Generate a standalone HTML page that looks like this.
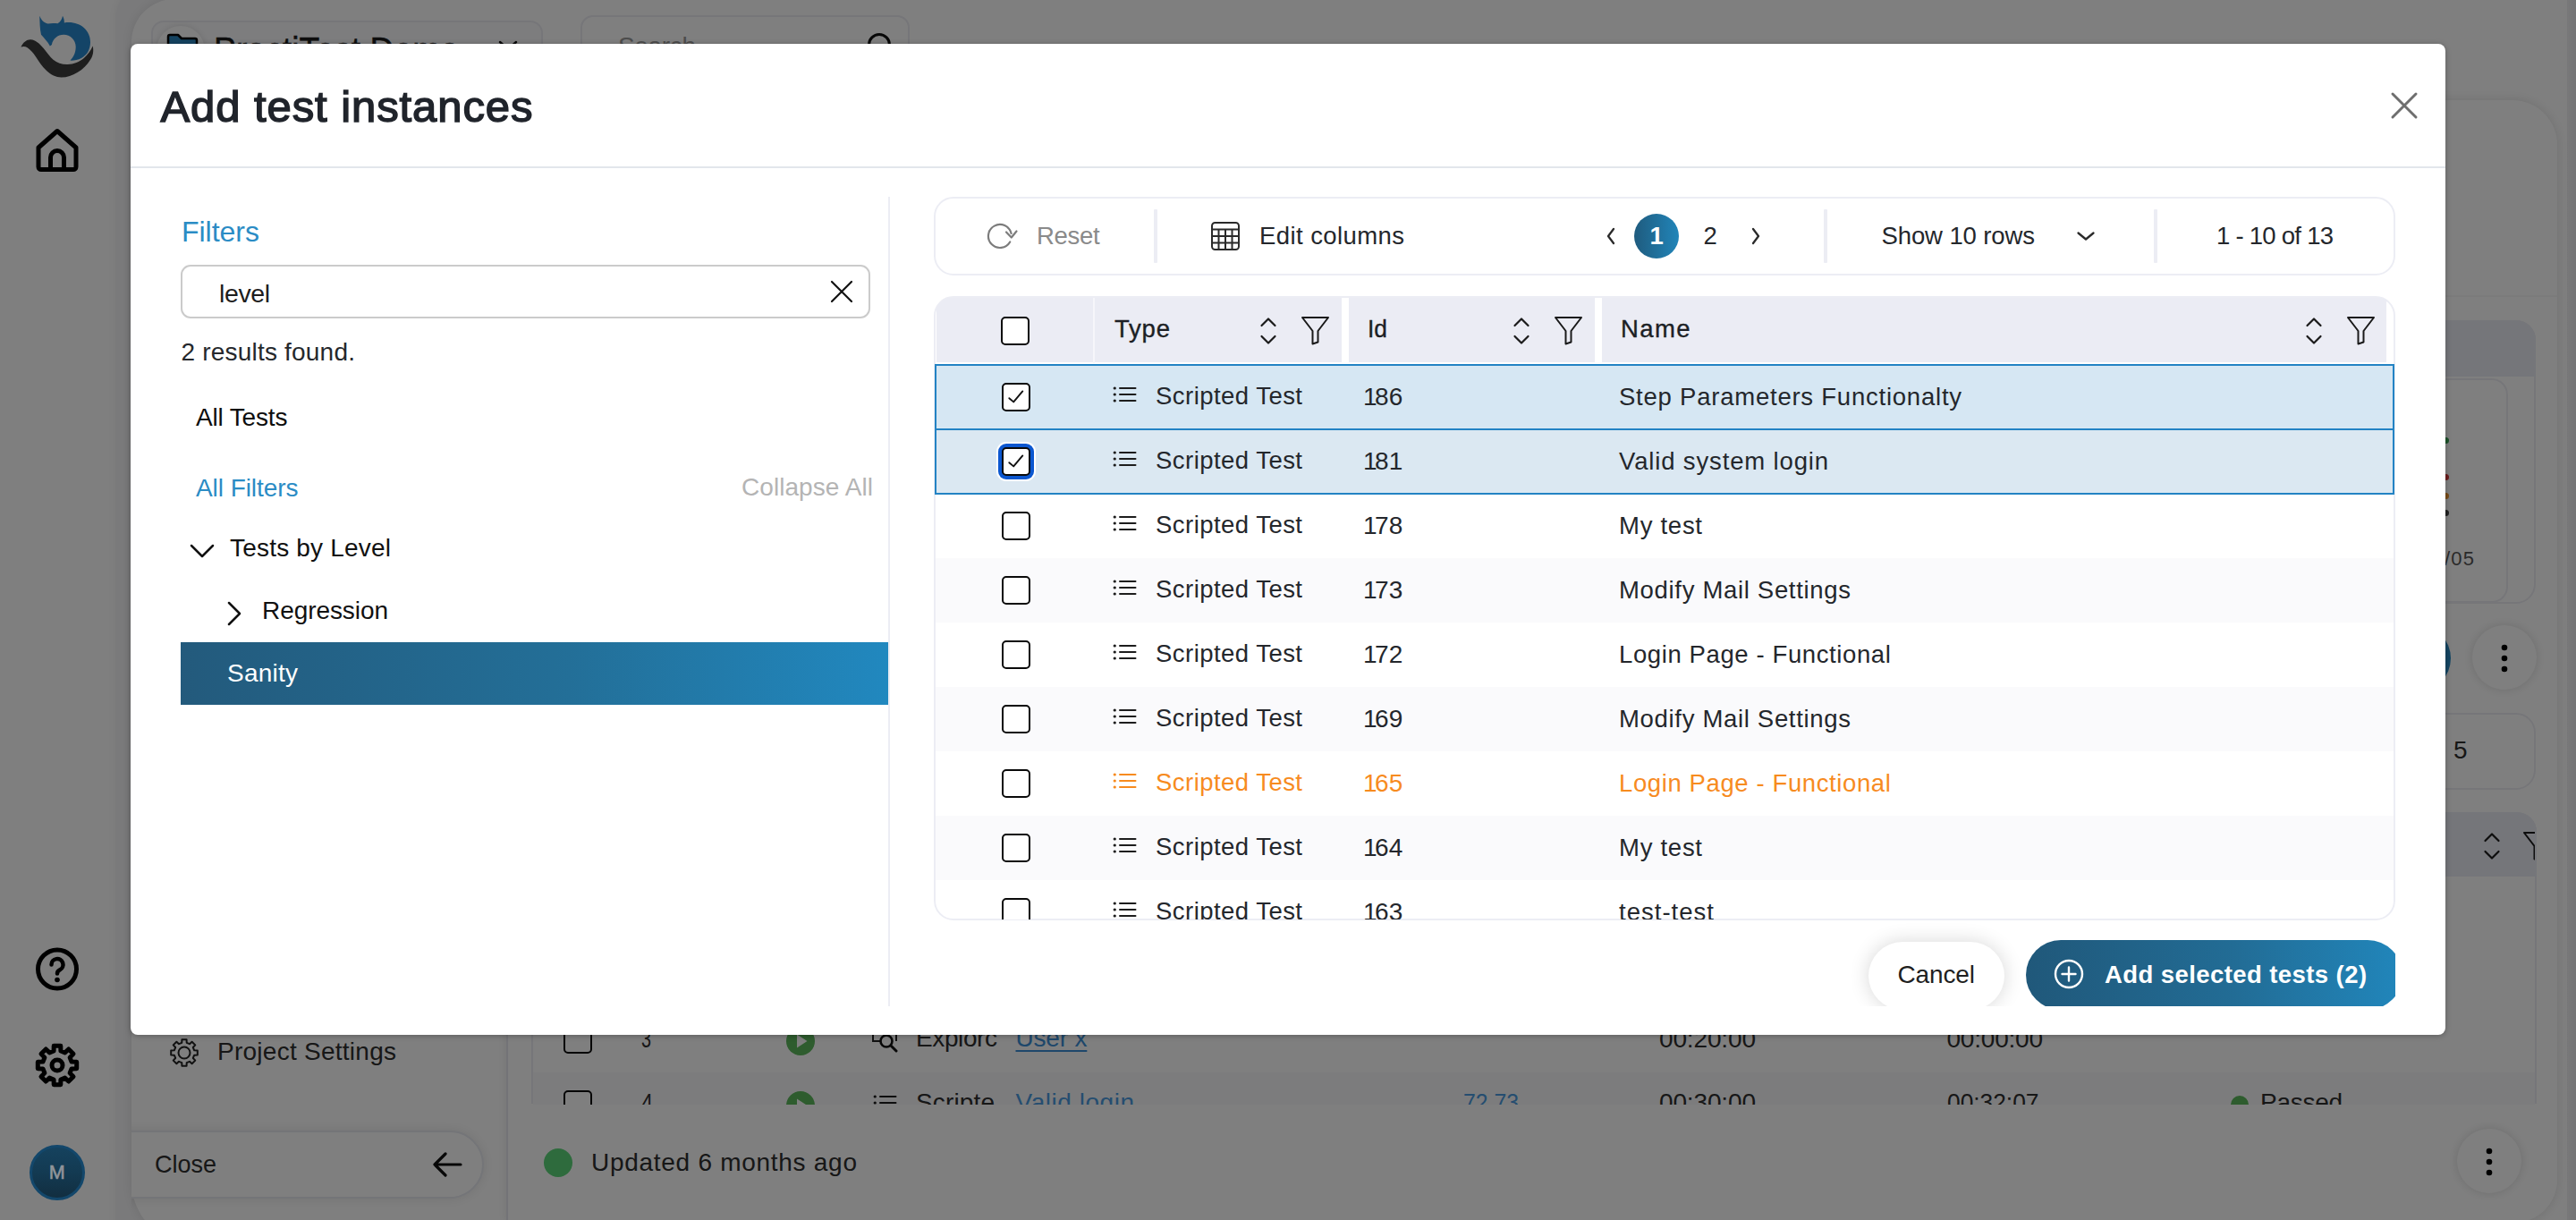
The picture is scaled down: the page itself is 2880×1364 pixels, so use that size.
<!DOCTYPE html><html lang="en"><head><meta charset="utf-8"><title>Add test instances</title><style>
*{box-sizing:border-box;margin:0;padding:0}
html,body{width:2880px;height:1364px;overflow:hidden;background:#fff;font-family:"Liberation Sans",sans-serif;color:#24272c}
.abs,.t,svg{position:absolute}
.t{white-space:nowrap;line-height:1;display:block}
#page{position:absolute;left:0;top:0;width:2880px;height:1364px;overflow:hidden;background:#fefefe}
#dim{position:absolute;left:0;top:0;width:2880px;height:1364px;background:rgba(0,0,0,.5)}
#modal{position:absolute;left:146px;top:49px;width:2588px;height:1108px;background:#fff;border-radius:8px;box-shadow:0 1px 6px rgba(0,0,0,.28);}
#wrap{position:absolute;left:0;top:0;width:2880px;height:1364px}
.cb{position:absolute;width:32px;height:32px;border:2.5px solid #0a0a0a;border-radius:5px;background:#fff}
.hc{position:absolute;top:333px;height:72px;background:#ebecf4}
.row{position:absolute;left:1046px;width:1630px;height:72px}
.row.alt{background:#fafafc}
.row.sel{left:1045px;width:1632px;height:74px;background:#d9e8f3;border:2px solid #2383c4}
.sep{position:absolute;top:234px;width:4px;height:60px;background:#ecedf4;border-radius:1px}
</style></head><body>
<div id="page">
<div class="abs" style="left:129px;top:-30px;width:2800px;height:1450px;border-radius:54px 0 0 54px;background:#f5f5f7;box-shadow:0 0 10px rgba(0,0,0,.05)"></div>
<div class="abs" style="left:147px;top:-1px;width:2733px;height:1392px;border-radius:48px 0 0 70px;background:#fff;box-shadow:0 0 14px rgba(0,0,0,.10)"></div>
<div class="abs" style="left:2870px;top:0;width:10px;height:1364px;background:linear-gradient(90deg,#f1f1f3,#e9e9ec)"></div>
<div class="abs" style="left:568px;top:112px;width:2291px;height:1255px;border-radius:0 50px 48px 0;background:#fff;box-shadow:0 0 13px rgba(0,0,0,.13)"></div>
<div class="abs" style="left:566px;top:112px;width:2px;height:1260px;background:#e6e7ef"></div>
<div class="abs" style="left:169px;top:23px;width:438px;height:70px;border-radius:14px;border:2px solid #ededf3;background:#fbfbfd"></div>
<div class="abs" style="left:175px;top:29px;width:54px;height:54px;border-radius:50%;background:#fff;box-shadow:0 0 8px rgba(0,0,0,.12)"></div>
<svg style="left:186px;top:37px" width="36" height="30" viewBox="0 0 36 30"><path d="M2 4a2 2 0 0 1 2-2h9l4 4h15a2 2 0 0 1 2 2v20H2z" fill="#2a86c0" stroke="#000" stroke-width="2.5" stroke-linejoin="round"/></svg>
<span class="t" style="left:239.0px;top:36.1px;font-size:40px;transform:scaleX(0.934);transform-origin:0 0;color:#1c1c1c;-webkit-text-stroke:.5px #1c1c1c;">PractiTest Demo</span>
<svg style="left:556px;top:44px" width="24" height="16" viewBox="0 0 24 16"><path d="M3 3l9 8 9-8" stroke="#111" stroke-width="2.5" fill="none" stroke-linecap="round"/></svg>
<div class="abs" style="left:649px;top:17px;width:368px;height:72px;border-radius:14px;border:2px solid #ececf2;background:#fff"></div>
<span class="t" style="left:691.0px;top:38.3px;font-size:28px;letter-spacing:-0.34px;color:#9a9a9a;">Search</span>
<svg style="left:968px;top:35px" width="36" height="36" viewBox="0 0 36 36"><circle cx="15" cy="15" r="11.5" stroke="#111" stroke-width="3" fill="none"/><path d="M24 24l8 8" stroke="#111" stroke-width="3" stroke-linecap="round"/></svg>
<svg style="left:0;top:0" width="128" height="100" viewBox="0 0 128 100"><path d="M44.2 17.7C46 22 49 25.500 53.500 26.500C57 25.800 61 25.800 64.500 26.300C67.500 24.500 69.300 21.500 70 17.700C71.500 20.500 72 23 71.800 25.500C88 23 101 33 101 47C101 55 97.500 61.500 91 65C87 67 82.500 67.800 78.400 67.600C82 64.500 84.700 59 84.700 52.300C84.700 44.800 78.700 38.800 71.200 38.800C64.500 38.800 59 43.500 57.900 50L55.900 51.400C53.500 47 49.500 43 46 38.800C44.500 32 44.500 25 44.200 17.700Z" fill="#2889cf"/><path d="M23.400 52.600C26 47 30 44 34.300 44.200C40 44.500 44.500 49 48.700 54C52.500 58.500 55.500 63.500 59.500 66.700C64 70.500 70 72.300 75.700 72C82.500 71.600 89 69 93.800 64.900C98 61.300 101.500 56.500 103.700 51.400C105 57 104 62.500 101 66.700C97.500 72.500 92.500 77.500 86.500 81C81 84.500 75 86.500 68.500 86.500C62.500 86.500 57 83.500 52.300 79.300C47 74.500 43.500 68.500 39.700 63C37 58.800 34 55.500 30.600 53.200C28.300 51.900 25.800 51.800 23.400 52.600Z" fill="#3c3c3c"/></svg>
<svg style="left:36px;top:140px" width="56" height="56" viewBox="0 0 56 56"><path d="M28 6.500L7 25v21.500a3 3 0 0 0 3 3h36a3 3 0 0 0 3-3V25z" stroke="#000" stroke-width="5" fill="none" stroke-linejoin="round"/><path d="M20.500 49V36a7.500 7.500 0 0 1 15 0v13" stroke="#000" stroke-width="5" fill="none"/></svg>
<svg style="left:36px;top:1056px" width="56" height="56" viewBox="0 0 56 56"><circle cx="28" cy="27.500" r="21.500" stroke="#000" stroke-width="5" fill="none"/><path d="M21.500 22.500a6.500 6.500 0 1 1 9.500 5.800c-2 1-3 2.200-3 4.200" stroke="#000" stroke-width="4.500" fill="none" stroke-linecap="round"/><circle cx="28" cy="39.500" r="2.800" fill="#000"/></svg>
<svg style="left:36px;top:1163px" width="56" height="56" viewBox="0 0 56 56"><path d="M24.2 6.3L31.8 6.3L31.9 12.0L36.6 13.9L40.7 10.0L46.0 15.3L42.1 19.4L44.0 24.1L49.7 24.2L49.7 31.8L44.0 31.9L42.1 36.6L46.0 40.7L40.7 46.0L36.6 42.1L31.9 44.0L31.8 49.7L24.2 49.7L24.1 44.0L19.4 42.1L15.3 46.0L10.0 40.7L13.9 36.6L12.0 31.9L6.3 31.8L6.3 24.2L12.0 24.1L13.9 19.4L10.0 15.3L15.3 10.0L19.4 13.9L24.1 12.0Z" stroke="#000" stroke-width="5" fill="none" stroke-linejoin="round"/><circle cx="28" cy="28" r="6" stroke="#000" stroke-width="5" fill="none"/></svg>
<svg style="left:188px;top:1159px" width="36" height="36" viewBox="0 0 36 36"><path d="M15.4 3.2L20.6 3.2L20.7 6.8L24.0 8.2L26.6 5.7L30.3 9.4L27.8 12.0L29.2 15.3L32.8 15.4L32.8 20.6L29.2 20.7L27.8 24.0L30.3 26.6L26.6 30.3L24.0 27.8L20.7 29.2L20.6 32.8L15.4 32.8L15.3 29.2L12.0 27.8L9.4 30.3L5.7 26.6L8.2 24.0L6.8 20.7L3.2 20.6L3.2 15.4L6.8 15.3L8.2 12.0L5.7 9.4L9.4 5.7L12.0 8.2L15.3 6.8Z" stroke="#222" stroke-width="2" fill="none" stroke-linejoin="round"/><circle cx="18" cy="18" r="6.500" stroke="#222" stroke-width="2" fill="none"/></svg>
<span class="t" style="left:243.0px;top:1162.3px;font-size:28px;letter-spacing:0.26px;color:#2e2e2e;">Project Settings</span>
<div class="abs" style="left:147px;top:1240px;width:421px;height:124px;overflow:hidden"><div class="abs" style="left:-60px;top:24px;width:454px;height:76px;border-radius:38px;background:#fff;border:2px solid #e8eaf1;box-shadow:0 0 14px rgba(0,0,0,.10)"></div></div>
<span class="t" style="left:173.0px;top:1286.9px;font-size:28.5px;transform:scaleX(0.947);transform-origin:0 0;color:#2e2e2e;">Close</span>
<svg style="left:480px;top:1284px" width="40" height="36" viewBox="0 0 40 36"><path d="M35 18H6M18 6L6 18L18 30" stroke="#111" stroke-width="3.200" fill="none" stroke-linecap="round" stroke-linejoin="round"/></svg>
<div class="abs" style="left:594px;top:330px;width:2265px;height:2px;background:rgba(0,0,0,.035)"></div>
<div class="abs" style="left:2500px;top:358px;width:335px;height:317px;border-radius:22px;border:2px solid #ececf3;background:#fff"></div>
<div class="abs" style="left:2500px;top:358px;width:335px;height:63px;border-radius:22px 22px 0 0;background:#ebecf4"></div>
<div class="abs" style="left:2500px;top:423px;width:304px;height:251px;border-radius:0 18px 18px 0;border:2px solid #ededf3;background:#fff"></div>
<div class="abs" style="left:2730px;top:489px;width:8px;height:7px;border-radius:4px;background:#3aa655"></div>
<div class="abs" style="left:2730px;top:530px;width:8px;height:7px;border-radius:4px;background:#d83a3a"></div>
<div class="abs" style="left:2730px;top:551px;width:8px;height:7px;border-radius:4px;background:#f0962e"></div>
<div class="abs" style="left:2730px;top:570px;width:8px;height:7px;border-radius:4px;background:#444"></div>
<span class="t" style="left:2733.0px;top:614.4px;font-size:22px;letter-spacing:1.21px;color:#555;">/05</span>
<div class="abs" style="left:2500px;top:698px;width:240px;height:76px;border-radius:38px;background:#2a8cc6"></div>
<div class="abs" style="left:2764px;top:699px;width:72px;height:72px;border-radius:50%;background:#fff;box-shadow:0 0 12px rgba(0,0,0,.14)"></div>
<svg style="left:2794px;top:719px" width="12" height="34" viewBox="0 0 12 34"><circle cx="6" cy="5" r="3.300"/><circle cx="6" cy="17" r="3.300"/><circle cx="6" cy="29" r="3.300"/></svg>
<div class="abs" style="left:2500px;top:797px;width:335px;height:86px;border-radius:22px;border:2px solid #ededf3;background:#fff"></div>
<span class="t" style="left:2743.0px;top:825.3px;font-size:28px;color:#2e2e2e;">5</span>
<div class="abs" style="left:594px;top:908px;width:2242px;height:326px;border-radius:22px 22px 0 0;border:2px solid #ececf3;border-bottom:0;background:#fff"></div>
<div class="abs" style="left:594px;top:908px;width:2242px;height:72px;border-radius:22px 22px 0 0;background:#ebecf4"></div>
<svg style="left:2776px;top:929px" width="20" height="34" viewBox="0 0 20 34"><path d="M2.500 11L10 3.500L17.500 11M2.500 23L10 30.500L17.500 23" stroke="#1a1a1a" stroke-width="2.200" fill="none" stroke-linecap="round" stroke-linejoin="round"/></svg>
<svg style="left:2820px;top:929px" width="14" height="34" viewBox="0 0 14 34"><path d="M2 2H31L19.500 17V29.500L13.500 31.500V17Z" stroke="#1a1a1a" stroke-width="2" fill="none" stroke-linejoin="round"/></svg>
<div class="abs" style="left:596px;top:1199px;width:2238px;height:36px;background:#f9f9fb"></div>
<div class="cb" style="left:630px;top:1146px"></div>
<span class="t" style="left:717.0px;top:1147.8px;font-size:28px;transform:scaleX(0.706);transform-origin:0 0;color:#2e2e2e;">3</span>
<svg style="left:879px;top:1148px" width="32" height="32" viewBox="0 0 32 32"><circle cx="16" cy="16" r="16" fill="#5cb85c"/><path d="M12 8.500L23.500 16L12 23.500Z" fill="#fff"/></svg>
<svg style="left:974px;top:1150px" width="30" height="30" viewBox="0 0 30 30"><path d="M2 3V14H11M22 3H28V14" stroke="#222" stroke-width="2" fill="none"/><circle cx="17" cy="14" r="6.500" stroke="#111" stroke-width="2.600" fill="none"/><path d="M22 19l6 6" stroke="#111" stroke-width="3" stroke-linecap="round"/></svg>
<span class="t" style="left:1024.0px;top:1147.3px;font-size:28px;letter-spacing:-0.39px;color:#2e2e2e;">Explorc</span>
<span class="t" style="left:1135.5px;top:1147.3px;font-size:28px;letter-spacing:-0.18px;color:#3d8fd6;text-decoration:underline;text-decoration-thickness:2px;text-underline-offset:4px;">User x</span>
<span class="t" style="left:1855.0px;top:1148.3px;font-size:28px;letter-spacing:-0.14px;color:#2e2e2e;">00:20:00</span>
<span class="t" style="left:2176.5px;top:1148.3px;font-size:28px;letter-spacing:-0.21px;color:#2e2e2e;">00:00:00</span>
<div class="abs" style="left:594px;top:1199px;width:2242px;height:36px;overflow:hidden"><div class="abs" style="left:-594px;top:-1199px;width:2880px;height:1364px">
<div class="cb" style="left:630px;top:1219px"></div>
<span class="t" style="left:717.0px;top:1219.3px;font-size:28px;transform:scaleX(0.835);transform-origin:0 0;color:#2e2e2e;">4</span>
<svg style="left:879px;top:1220px" width="32" height="32" viewBox="0 0 32 32"><circle cx="16" cy="16" r="16" fill="#5cb85c"/><path d="M12 8.500L23.500 16L12 23.500Z" fill="#fff"/></svg>
<svg style="left:975px;top:1222px" width="28" height="22" viewBox="0 0 28 22"><path d="M9 4H26.500M9 11H26.500M9 18H26.500" stroke="#1d1d1d" stroke-width="2" stroke-linecap="round" fill="none"/><path d="M3.200 4h.1M3.200 11h.1M3.200 18h.1" stroke="#1d1d1d" stroke-width="3.200" stroke-linecap="round" fill="none"/></svg>
<span class="t" style="left:1024.0px;top:1219.3px;font-size:28px;letter-spacing:0.14px;color:#2e2e2e;">Scripte</span>
<span class="t" style="left:1135.5px;top:1219.3px;font-size:28px;letter-spacing:0.54px;color:#4a9be0;">Valid login</span>
<span class="t" style="left:1636.0px;top:1219.3px;font-size:28px;transform:scaleX(0.885);transform-origin:0 0;color:#4a9be0;">72,73</span>
<span class="t" style="left:1855.0px;top:1219.3px;font-size:28px;letter-spacing:-0.14px;color:#2e2e2e;">00:30:00</span>
<span class="t" style="left:2176.5px;top:1219.3px;font-size:28px;transform:scaleX(0.940);transform-origin:0 0;color:#2e2e2e;">00:32:07</span>
<div class="abs" style="left:2494px;top:1225px;width:20px;height:20px;border-radius:50%;background:#5cb85c"></div>
<span class="t" style="left:2527.0px;top:1219.3px;font-size:28px;letter-spacing:-0.28px;color:#2e2e2e;">Passed</span>
</div></div>
<div class="abs" style="left:608px;top:1284px;width:32px;height:32px;border-radius:50%;background:#5cd67a"></div>
<span class="t" style="left:661.0px;top:1285.8px;font-size:28px;letter-spacing:0.72px;color:#2e2e2e;">Updated 6 months ago</span>
<div class="abs" style="left:2747px;top:1262px;width:72px;height:72px;border-radius:50%;background:#fff;box-shadow:0 0 12px rgba(0,0,0,.14)"></div>
<svg style="left:2777px;top:1282px" width="12" height="34" viewBox="0 0 12 34"><circle cx="6" cy="5" r="3.300"/><circle cx="6" cy="17" r="3.300"/><circle cx="6" cy="29" r="3.300"/></svg>
</div>
<div id="dim"></div>
<div id="wrap"><div id="modal"></div>
<div class="abs" style="left:33px;top:1280px;width:62px;height:62px;border-radius:50%;background:linear-gradient(180deg,#15425e 0%,#133a52 50%,#122e40 100%);border:3.5px solid #13476b"></div>
<span class="t" style="left:54.7px;top:1301.3px;font-size:21.5px;letter-spacing:0.69px;color:#90959a;-webkit-text-stroke:.6px #90959a;">M</span>
<span class="t" style="left:179.5px;top:94.5px;font-size:49px;letter-spacing:0.92px;color:#20242b;-webkit-text-stroke:1.5px #20242b;">Add test instances</span>
<div class="abs" style="left:146px;top:186px;width:2588px;height:2px;background:#e2e6ec"></div>
<svg style="left:2670px;top:100px" width="36" height="36" viewBox="0 0 36 36"><path d="M5 5L31 31M31 5L5 31" stroke="#6e6e6e" stroke-width="3" stroke-linecap="round" fill="none"/></svg>
<span class="t" style="left:203.0px;top:242.9px;font-size:32px;letter-spacing:-0.02px;color:#2b8cc5;">Filters</span>
<div class="abs" style="left:202px;top:296px;width:771px;height:60px;border:2px solid #cbcbcb;border-radius:11px;background:#fff"></div>
<span class="t" style="left:245.0px;top:313.9px;font-size:28.5px;letter-spacing:-0.40px;color:#1d1d1d;">level</span>
<svg style="left:925px;top:310px" width="32" height="32" viewBox="0 0 32 32"><path d="M5 5L27 27M27 5L5 27" stroke="#111" stroke-width="2.2" stroke-linecap="round" fill="none"/></svg>
<span class="t" style="left:202.5px;top:380.3px;font-size:28px;letter-spacing:0.20px;color:#25282c;">2 results found.</span>
<span class="t" style="left:219.0px;top:453.3px;font-size:28px;letter-spacing:-0.16px;color:#0d0d0d;">All Tests</span>
<span class="t" style="left:219.0px;top:532.3px;font-size:28px;letter-spacing:-0.06px;color:#2b8cc5;">All Filters</span>
<span class="t" style="left:829.0px;top:531.3px;font-size:28px;letter-spacing:0.06px;color:#b4b4b4;">Collapse All</span>
<svg style="left:209px;top:604px" width="34" height="24" viewBox="0 0 34 24"><path d="M5 6L17 18L29 6" stroke="#111" stroke-width="2.5" stroke-linecap="round" stroke-linejoin="round" fill="none"/></svg>
<span class="t" style="left:257.0px;top:599.3px;font-size:28px;letter-spacing:0.20px;color:#111;">Tests by Level</span>
<svg style="left:250px;top:669px" width="24" height="34" viewBox="0 0 24 34"><path d="M6 5L18 17L6 29" stroke="#111" stroke-width="2.5" stroke-linecap="round" stroke-linejoin="round" fill="none"/></svg>
<span class="t" style="left:293.0px;top:668.8px;font-size:28px;letter-spacing:-0.07px;color:#111;">Regression</span>
<div class="abs" style="left:202px;top:718px;width:791px;height:70px;background:linear-gradient(90deg,#235a7c 0%,#236f98 55%,#2188bf 100%)"></div>
<span class="t" style="left:254.0px;top:738.8px;font-size:28px;letter-spacing:0.24px;color:#fff;">Sanity</span>
<div class="abs" style="left:993px;top:220px;width:2px;height:905px;background:#ecedf4"></div>
<div class="abs" style="left:1044px;top:220px;width:1634px;height:88px;border:2px solid #ecedf4;border-radius:22px;background:#fff"></div>
<div class="sep" style="left:1290px"></div><div class="sep" style="left:2039px"></div><div class="sep" style="left:2408px"></div>
<svg style="left:1100px;top:246px" width="42" height="36" viewBox="0 0 42 36"><path d="M29.2 24.5A13 13 0 1 1 30.6 15" stroke="#7c7c7c" stroke-width="2.2" fill="none" stroke-linecap="round"/><path d="M25 13.5L30.8 19.5L36.5 12.5" stroke="#7c7c7c" stroke-width="2.2" fill="none" stroke-linecap="round" stroke-linejoin="round"/></svg>
<span class="t" style="left:1159.0px;top:250.2px;font-size:27.5px;letter-spacing:-0.33px;color:#8a8a8a;">Reset</span>
<svg style="left:1353px;top:247px" width="34" height="34" viewBox="0 0 34 34"><rect x="2" y="2" width="30" height="30" rx="3.5" fill="none" stroke="#2a2a2a" stroke-width="2"/><path d="M2 9.5H32M2 17H32M2 24.5H32M9.5 9.5V32M17 9.5V32M24.5 9.5V32" stroke="#2a2a2a" stroke-width="2" fill="none"/></svg>
<span class="t" style="left:1408.0px;top:250.2px;font-size:27.5px;letter-spacing:0.42px;">Edit columns</span>
<svg style="left:1793px;top:252px" width="16" height="24" viewBox="0 0 16 24"><path d="M11 4L5 12L11 20" stroke="#2a2a2a" stroke-width="2.3" fill="none" stroke-linecap="round" stroke-linejoin="round"/></svg>
<div class="abs" style="left:1827px;top:239px;width:50px;height:50px;border-radius:50%;background:linear-gradient(90deg,#1f5b7e,#2185b9)"></div>
<span class="t" style="left:1844.5px;top:249.7px;font-size:27.5px;color:#fff;font-weight:700;">1</span>
<span class="t" style="left:1904.5px;top:250.2px;font-size:27.5px;">2</span>
<svg style="left:1955px;top:252px" width="16" height="24" viewBox="0 0 16 24"><path d="M5 4L11 12L5 20" stroke="#2a2a2a" stroke-width="2.3" fill="none" stroke-linecap="round" stroke-linejoin="round"/></svg>
<span class="t" style="left:2103.5px;top:250.2px;font-size:27.5px;letter-spacing:-0.11px;">Show 10 rows</span>
<svg style="left:2319px;top:256px" width="26" height="16" viewBox="0 0 26 16"><path d="M4.5 4.5L13 11.5L21.5 4.5" stroke="#2a2a2a" stroke-width="2.3" fill="none" stroke-linecap="round" stroke-linejoin="round"/></svg>
<span class="t" style="left:2478.0px;top:250.2px;font-size:27.5px;letter-spacing:-0.74px;">1 - 10 of 13</span>
<div class="abs" style="left:1044px;top:331px;width:1634px;height:698px;border:2px solid #ecedf4;border-radius:22px;background:#fff;overflow:hidden">
</div>
<div class="abs" style="left:1045px;top:332px;width:1632px;height:696px;border-radius:21px;overflow:hidden"><div class="abs" style="left:-1045px;top:-332px;width:2880px;height:1364px">
<div class="hc" style="left:1047px;width:175px"></div>
<div class="hc" style="left:1224px;width:276px"></div>
<div class="hc" style="left:1508px;width:275px"></div>
<div class="hc" style="left:1791px;width:877px"></div>
<div class="abs" style="left:1222px;top:333px;width:2px;height:73px;background:#f6f6fa"></div>
<div class="cb" style="left:1119px;top:354px"></div>
<span class="t" style="left:1246.0px;top:353.7px;font-size:27.5px;letter-spacing:0.79px;color:#1c1f24;-webkit-text-stroke:.35px #1c1f24;">Type</span>
<svg style="left:1408px;top:353px" width="20" height="34" viewBox="0 0 20 34"><path d="M2.5 11L10 3.5L17.5 11M2.5 23L10 30.5L17.5 23" stroke="#1a1a1a" stroke-width="2.2" fill="none" stroke-linecap="round" stroke-linejoin="round"/></svg>
<svg style="left:1454px;top:353px" width="33" height="34" viewBox="0 0 33 34"><path d="M2 2H31L19.5 17V29.5L13.5 31.5V17Z" stroke="#1a1a1a" stroke-width="2" fill="none" stroke-linejoin="round"/></svg>
<span class="t" style="left:1529.0px;top:353.7px;font-size:27.5px;transform:scaleX(0.959);transform-origin:0 0;color:#1c1f24;-webkit-text-stroke:.35px #1c1f24;">Id</span>
<svg style="left:1691px;top:353px" width="20" height="34" viewBox="0 0 20 34"><path d="M2.5 11L10 3.5L17.5 11M2.5 23L10 30.5L17.5 23" stroke="#1a1a1a" stroke-width="2.2" fill="none" stroke-linecap="round" stroke-linejoin="round"/></svg>
<svg style="left:1737px;top:353px" width="33" height="34" viewBox="0 0 33 34"><path d="M2 2H31L19.5 17V29.5L13.5 31.5V17Z" stroke="#1a1a1a" stroke-width="2" fill="none" stroke-linejoin="round"/></svg>
<span class="t" style="left:1812.0px;top:353.7px;font-size:27.5px;letter-spacing:1.38px;color:#1c1f24;-webkit-text-stroke:.35px #1c1f24;">Name</span>
<svg style="left:2577px;top:353px" width="20" height="34" viewBox="0 0 20 34"><path d="M2.5 11L10 3.5L17.5 11M2.5 23L10 30.5L17.5 23" stroke="#1a1a1a" stroke-width="2.2" fill="none" stroke-linecap="round" stroke-linejoin="round"/></svg>
<svg style="left:2623px;top:353px" width="33" height="34" viewBox="0 0 33 34"><path d="M2 2H31L19.5 17V29.5L13.5 31.5V17Z" stroke="#1a1a1a" stroke-width="2" fill="none" stroke-linejoin="round"/></svg>
<div class="row sel" style="top:407px;background:#d6e7f3"></div>
<div class="cb" style="left:1120px;top:428px"></div>
<svg style="left:1120px;top:428px" width="32" height="32" viewBox="0 0 32 32"><path d="M8.3 17.2L13.2 21.4L23.3 9.4" stroke="#111" stroke-width="1.9" fill="none" stroke-linecap="round" stroke-linejoin="round"/></svg>
<svg style="left:1243px;top:430px" width="28" height="22" viewBox="0 0 28 22"><path d="M9 4H26.5M9 11H26.5M9 18H26.5" stroke="#1d1d1d" stroke-width="2" stroke-linecap="round" fill="none"/><path d="M3.2 4h.1M3.2 11h.1M3.2 18h.1" stroke="#1d1d1d" stroke-width="3.2" stroke-linecap="round" fill="none"/></svg>
<span class="t" style="left:1292.0px;top:428.7px;font-size:27.5px;letter-spacing:0.46px;color:#24272c;">Scripted Test</span>
<span class="t" style="left:1524.0px;top:430.3px;font-size:28px;color:#24272c;"><span style="letter-spacing:-2.5px">1</span>86</span>
<span class="t" style="left:1810.0px;top:430.2px;font-size:27.5px;letter-spacing:0.77px;color:#24272c;">Step Parameters Functionalty</span>
<div class="row sel" style="top:479px;background:#dbe8f2"></div>
<div class="abs" style="left:1114px;top:494px;width:44px;height:44px;border-radius:11px;background:#fff"></div>
<div class="abs" style="left:1116px;top:496px;width:40px;height:40px;border-radius:9px;background:#0b57d0"></div>
<div class="cb" style="left:1120px;top:500px"></div>
<svg style="left:1120px;top:500px" width="32" height="32" viewBox="0 0 32 32"><path d="M8.3 17.2L13.2 21.4L23.3 9.4" stroke="#111" stroke-width="1.9" fill="none" stroke-linecap="round" stroke-linejoin="round"/></svg>
<svg style="left:1243px;top:502px" width="28" height="22" viewBox="0 0 28 22"><path d="M9 4H26.5M9 11H26.5M9 18H26.5" stroke="#1d1d1d" stroke-width="2" stroke-linecap="round" fill="none"/><path d="M3.2 4h.1M3.2 11h.1M3.2 18h.1" stroke="#1d1d1d" stroke-width="3.2" stroke-linecap="round" fill="none"/></svg>
<span class="t" style="left:1292.0px;top:500.7px;font-size:27.5px;letter-spacing:0.46px;color:#24272c;">Scripted Test</span>
<span class="t" style="left:1524.0px;top:502.3px;font-size:28px;color:#24272c;"><span style="letter-spacing:-2.5px">1</span>81</span>
<span class="t" style="left:1810.0px;top:502.2px;font-size:27.5px;letter-spacing:0.85px;color:#24272c;">Valid system login</span>
<div class="cb" style="left:1120px;top:572px"></div>
<svg style="left:1243px;top:574px" width="28" height="22" viewBox="0 0 28 22"><path d="M9 4H26.5M9 11H26.5M9 18H26.5" stroke="#1d1d1d" stroke-width="2" stroke-linecap="round" fill="none"/><path d="M3.2 4h.1M3.2 11h.1M3.2 18h.1" stroke="#1d1d1d" stroke-width="3.2" stroke-linecap="round" fill="none"/></svg>
<span class="t" style="left:1292.0px;top:572.7px;font-size:27.5px;letter-spacing:0.46px;color:#24272c;">Scripted Test</span>
<span class="t" style="left:1524.0px;top:574.3px;font-size:28px;color:#24272c;"><span style="letter-spacing:-2.5px">1</span>78</span>
<span class="t" style="left:1810.0px;top:574.2px;font-size:27.5px;letter-spacing:0.73px;color:#24272c;">My test</span>
<div class="row alt" style="top:624px"></div>
<div class="cb" style="left:1120px;top:644px"></div>
<svg style="left:1243px;top:646px" width="28" height="22" viewBox="0 0 28 22"><path d="M9 4H26.5M9 11H26.5M9 18H26.5" stroke="#1d1d1d" stroke-width="2" stroke-linecap="round" fill="none"/><path d="M3.2 4h.1M3.2 11h.1M3.2 18h.1" stroke="#1d1d1d" stroke-width="3.2" stroke-linecap="round" fill="none"/></svg>
<span class="t" style="left:1292.0px;top:644.7px;font-size:27.5px;letter-spacing:0.46px;color:#24272c;">Scripted Test</span>
<span class="t" style="left:1524.0px;top:646.3px;font-size:28px;color:#24272c;"><span style="letter-spacing:-2.5px">1</span>73</span>
<span class="t" style="left:1810.0px;top:646.2px;font-size:27.5px;letter-spacing:0.68px;color:#24272c;">Modify Mail Settings</span>
<div class="cb" style="left:1120px;top:716px"></div>
<svg style="left:1243px;top:718px" width="28" height="22" viewBox="0 0 28 22"><path d="M9 4H26.5M9 11H26.5M9 18H26.5" stroke="#1d1d1d" stroke-width="2" stroke-linecap="round" fill="none"/><path d="M3.2 4h.1M3.2 11h.1M3.2 18h.1" stroke="#1d1d1d" stroke-width="3.2" stroke-linecap="round" fill="none"/></svg>
<span class="t" style="left:1292.0px;top:716.7px;font-size:27.5px;letter-spacing:0.46px;color:#24272c;">Scripted Test</span>
<span class="t" style="left:1524.0px;top:718.3px;font-size:28px;color:#24272c;"><span style="letter-spacing:-2.5px">1</span>72</span>
<span class="t" style="left:1810.0px;top:718.2px;font-size:27.5px;letter-spacing:0.61px;color:#24272c;">Login Page - Functional</span>
<div class="row alt" style="top:768px"></div>
<div class="cb" style="left:1120px;top:788px"></div>
<svg style="left:1243px;top:790px" width="28" height="22" viewBox="0 0 28 22"><path d="M9 4H26.5M9 11H26.5M9 18H26.5" stroke="#1d1d1d" stroke-width="2" stroke-linecap="round" fill="none"/><path d="M3.2 4h.1M3.2 11h.1M3.2 18h.1" stroke="#1d1d1d" stroke-width="3.2" stroke-linecap="round" fill="none"/></svg>
<span class="t" style="left:1292.0px;top:788.7px;font-size:27.5px;letter-spacing:0.46px;color:#24272c;">Scripted Test</span>
<span class="t" style="left:1524.0px;top:790.3px;font-size:28px;color:#24272c;"><span style="letter-spacing:-2.5px">1</span>69</span>
<span class="t" style="left:1810.0px;top:790.2px;font-size:27.5px;letter-spacing:0.68px;color:#24272c;">Modify Mail Settings</span>
<div class="cb" style="left:1120px;top:860px"></div>
<svg style="left:1243px;top:862px" width="28" height="22" viewBox="0 0 28 22"><path d="M9 4H26.5M9 11H26.5M9 18H26.5" stroke="#f78b1f" stroke-width="2" stroke-linecap="round" fill="none"/><path d="M3.2 4h.1M3.2 11h.1M3.2 18h.1" stroke="#f78b1f" stroke-width="3.2" stroke-linecap="round" fill="none"/></svg>
<span class="t" style="left:1292.0px;top:860.7px;font-size:27.5px;letter-spacing:0.46px;color:#f78b1f;">Scripted Test</span>
<span class="t" style="left:1524.0px;top:862.3px;font-size:28px;color:#f78b1f;"><span style="letter-spacing:-2.5px">1</span>65</span>
<span class="t" style="left:1810.0px;top:862.2px;font-size:27.5px;letter-spacing:0.61px;color:#f78b1f;">Login Page - Functional</span>
<div class="row alt" style="top:912px"></div>
<div class="cb" style="left:1120px;top:932px"></div>
<svg style="left:1243px;top:934px" width="28" height="22" viewBox="0 0 28 22"><path d="M9 4H26.5M9 11H26.5M9 18H26.5" stroke="#1d1d1d" stroke-width="2" stroke-linecap="round" fill="none"/><path d="M3.2 4h.1M3.2 11h.1M3.2 18h.1" stroke="#1d1d1d" stroke-width="3.2" stroke-linecap="round" fill="none"/></svg>
<span class="t" style="left:1292.0px;top:932.7px;font-size:27.5px;letter-spacing:0.46px;color:#24272c;">Scripted Test</span>
<span class="t" style="left:1524.0px;top:934.3px;font-size:28px;color:#24272c;"><span style="letter-spacing:-2.5px">1</span>64</span>
<span class="t" style="left:1810.0px;top:934.2px;font-size:27.5px;letter-spacing:0.73px;color:#24272c;">My test</span>
<div class="cb" style="left:1120px;top:1004px"></div>
<svg style="left:1243px;top:1006px" width="28" height="22" viewBox="0 0 28 22"><path d="M9 4H26.5M9 11H26.5M9 18H26.5" stroke="#1d1d1d" stroke-width="2" stroke-linecap="round" fill="none"/><path d="M3.2 4h.1M3.2 11h.1M3.2 18h.1" stroke="#1d1d1d" stroke-width="3.2" stroke-linecap="round" fill="none"/></svg>
<span class="t" style="left:1292.0px;top:1004.7px;font-size:27.5px;letter-spacing:0.46px;color:#24272c;">Scripted Test</span>
<span class="t" style="left:1524.0px;top:1006.3px;font-size:28px;color:#24272c;"><span style="letter-spacing:-2.5px">1</span>63</span>
<span class="t" style="left:1810.0px;top:1006.2px;font-size:27.5px;letter-spacing:1.02px;color:#24272c;">test-test</span>
</div></div>
<div class="abs" style="left:1044px;top:1030px;width:1634px;height:95px;overflow:hidden">
<div class="abs" style="left:1045px;top:23px;width:152px;height:76px;border-radius:38px;background:#fff;box-shadow:0 0 22px rgba(0,0,0,.16)"></div>
<div class="abs" style="left:1221px;top:21px;width:421px;height:78px;border-radius:39px;background:linear-gradient(90deg,#20587a 0%,#226c95 55%,#2186bb 100%)"></div>
<svg style="left:1251px;top:41px" width="36" height="36" viewBox="0 0 36 36"><circle cx="18" cy="18" r="15" stroke="#fff" stroke-width="2.4" fill="none"/><path d="M10.5 18H25.5M18 10.5V25.5" stroke="#fff" stroke-width="2.4" stroke-linecap="round"/></svg>
</div>
<span class="t" style="left:2121.5px;top:1075.8px;font-size:28px;letter-spacing:-0.13px;color:#1f1f1f;">Cancel</span>
<span class="t" style="left:2353.0px;top:1075.7px;font-size:27.5px;letter-spacing:0.42px;color:#fff;font-weight:700;">Add selected tests (2)</span>
</div>
<script>(function(){var w=window.innerWidth;if(w&&Math.abs(w-2880)>2){document.documentElement.style.zoom=w/2880;}})();</script>
</body></html>
